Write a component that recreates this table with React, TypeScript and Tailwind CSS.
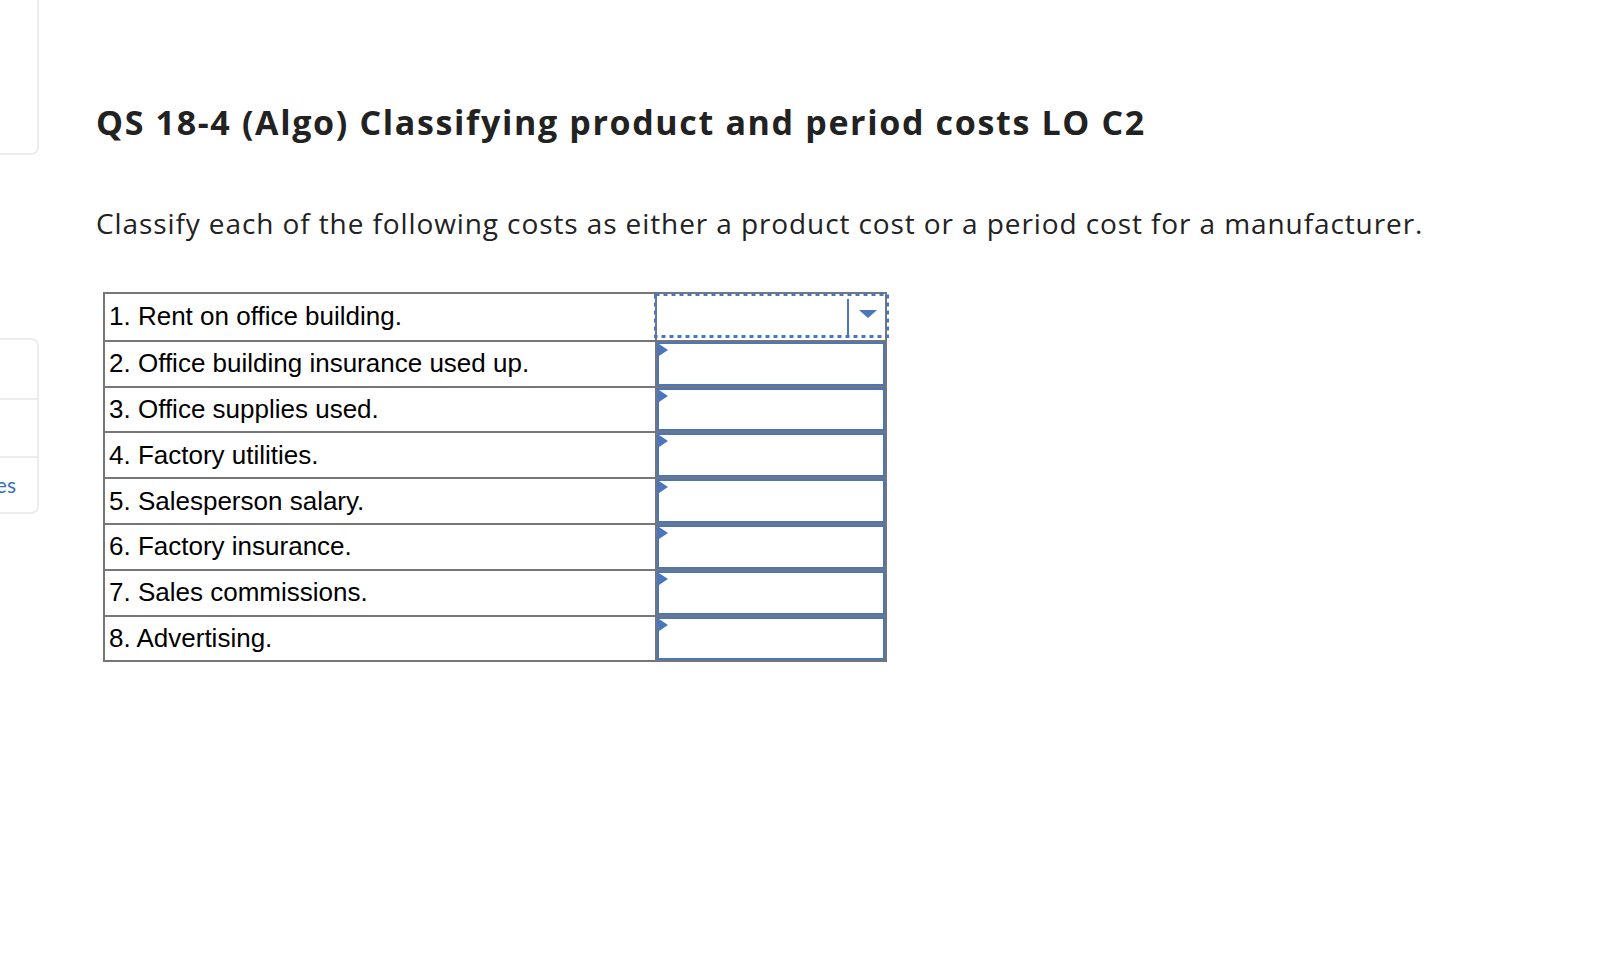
import React from "react";

const rows = [
  "1. Rent on office building.",
  "2. Office building insurance used up.",
  "3. Office supplies used.",
  "4. Factory utilities.",
  "5. Salesperson salary.",
  "6. Factory insurance.",
  "7. Sales commissions.",
  "8. Advertising.",
];

function DottedBox() {
  return (
    <svg className="absolute -left-[3px] -top-[1px] pointer-events-none" width="235" height="45" viewBox="0 0 235 45">
      <rect x="1.5" y="1.5" width="232" height="42" fill="none" stroke="#4a76bd" strokeWidth="3" strokeDasharray="4 4" />
    </svg>
  );
}

export default function App() {
  return (
    <div className="flex min-h-[956px] w-[1618px] bg-white">
      <aside className="flex w-[39px] shrink-0 flex-col">
        <div className="h-[155px] rounded-br-[8px] border-b-2 border-r-2 border-[#ececec]" />
        <div className="mt-[183px] flex h-[176px] flex-col overflow-hidden rounded-r-[8px] border-y-2 border-r-2 border-[#ececec]">
          <div className="h-[60px] border-b-2 border-[#ececec]" />
          <div className="h-[58px] border-b-2 border-[#ececec]" />
          <div className="flex flex-1 items-center justify-end overflow-hidden pr-[21px]">
            <span className="whitespace-nowrap text-[21px] text-[#3b70b9]" style={{ fontFamily: "Lato, sans-serif" }}>
              References
            </span>
          </div>
        </div>
      </aside>
      <main className="flex flex-col pl-[57px] pt-[102px]">
        <h1
          className="text-[34px] font-bold leading-[40px] tracking-[1.65px] text-[#222]"
          style={{ fontFamily: "'Open Sans', sans-serif" }}
        >
          QS 18-4 (Algo) Classifying product and period costs LO C2
        </h1>
        <p
          className="mt-[63px] text-[28px] leading-[36px] tracking-[0.9px] text-[#222]"
          style={{ fontFamily: "'Open Sans', sans-serif" }}
        >
          Classify each of the following costs as either a product cost or a period cost for a manufacturer.
        </p>
        <div
          className="ml-[7px] mt-[51px] w-[784px] border-2 border-[#767676] text-[26px] text-black"
          style={{ fontFamily: "'Liberation Sans', Arial, sans-serif" }}
        >
          {rows.map((r, i) => (
            <div key={i} className={`flex h-[45.8px] ${i > 0 ? "border-t-2 border-[#767676]" : ""}`}>
              <div className="flex w-[552px] items-center border-r-2 border-[#767676] pl-[4px]">{r}</div>
              <div className="relative flex-1">
                {i === 0 ? (
                  <div className="relative flex h-full items-center justify-end">
                    <DottedBox />
                    <div className="mr-[36px] h-[36px] w-[2px] bg-[#4a76bd]" />
                    <svg className="absolute right-[8px] top-[16px]" width="18" height="8" viewBox="0 0 18 8">
                      <polygon points="0,0 18,0 9,8" fill="#4a76bd" />
                    </svg>
                  </div>
                ) : (
                  <div className="relative h-full border-2 border-[#4a76bd]">
                    <svg className="absolute left-0 top-0" width="9" height="12" viewBox="0 0 9 12">
                      <polygon points="0,0 9,6 0,12" fill="#4a76bd" />
                    </svg>
                  </div>
                )}
              </div>
            </div>
          ))}
        </div>
      </main>
    </div>
  );
}
